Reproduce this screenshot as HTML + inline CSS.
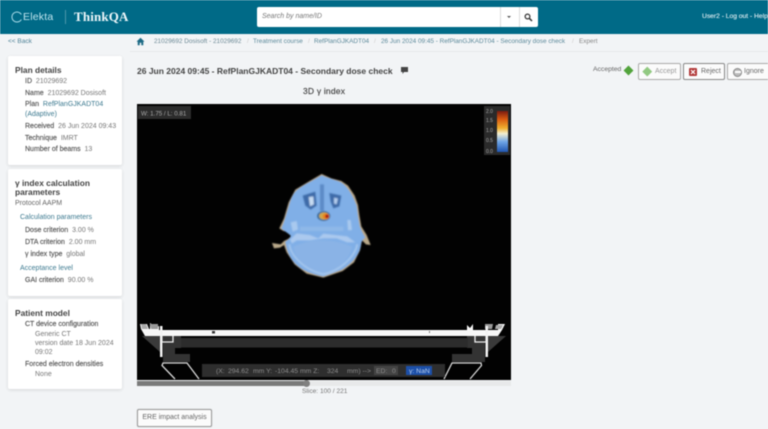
<!DOCTYPE html>
<html><head><meta charset="utf-8">
<style>
html,body{margin:0;padding:0;background:#f2f4f6}
#p{position:relative;width:768px;height:429px;overflow:hidden;background:#f2f4f6;font-family:"Liberation Sans",sans-serif;font-size:7px;color:#555;filter:blur(.5px)}
#p div{position:absolute;white-space:nowrap}
.card{background:#fff;border-radius:2px;box-shadow:0 1px 3px rgba(0,0,0,.12)}
.h{font-size:8.4px;font-weight:bold;color:#444}
.l{color:#555;-webkit-text-stroke:.15px #555}
.v{color:#777}
.t{color:#3d7a90}
.bc{top:38px;font-size:6.4px;color:#5d8a9b}
.sep{top:38px;font-size:6.4px;color:#ccc}
.btn{background:#fbfbfb;border:1px solid #aaa;border-radius:2px;box-sizing:border-box;font-size:7px;color:#666;height:17px;line-height:15px}
</style></head><body>
<div id="p">
<div style="left:0;top:0;width:768px;height:33.500px;background:#006a87"></div>
<svg style="position:absolute;left:11px;top:11px" width="12" height="12" viewBox="0 0 12 12"><path d="M10.300 3.500A5 5 0 1 0 10.300 8.500" fill="none" stroke="#a9dbe9" stroke-width="1"/></svg>
<div style="left:23px;top:10.500px;font-size:10.500px;color:#bfe4ee;letter-spacing:.2px">Elekta</div>
<div style="left:65px;top:10px;width:1px;height:14px;background:#4d97ab"></div>
<div style="left:74px;top:9px;font-family:'Liberation Serif',serif;font-weight:bold;font-size:13px;color:#eef7fa;letter-spacing:.15px">ThinkQA</div>
<div style="left:257px;top:7px;width:281px;height:20px;background:#fff;border-radius:2px"></div>
<div style="left:262px;top:12.500px;font-size:7px;font-style:italic;color:#777">Search by name/ID</div>
<div style="left:500px;top:7px;width:1px;height:20px;background:#ddd"></div>
<div style="left:519px;top:7px;width:1px;height:20px;background:#ddd"></div>
<div style="left:507px;top:16px;width:0;height:0;border:2px solid transparent;border-top:2px solid #555"></div>
<svg style="position:absolute;left:524px;top:13px" width="9" height="9" viewBox="0 0 9 9"><circle cx="3.500" cy="3.500" r="2.400" fill="none" stroke="#333" stroke-width="1.200"/><path d="M5.300 5.300L8 8" stroke="#333" stroke-width="1.500"/></svg>
<div style="left:702px;top:13px;font-size:6.700px;color:#e3f0f4;-webkit-text-stroke:.1px #e3f0f4">User2 - Log out - Help</div>

<div style="left:8px;top:38px;font-size:6.500px;color:#4d8196">&lt;&lt; Back</div>
<div style="left:130px;top:51px;width:638px;height:1px;background:#e6e8ea"></div>
<svg style="position:absolute;left:136px;top:37px" width="9" height="9" viewBox="0 0 9 9"><path d="M4.500 .8L.5 4.600H1.700V8.300H3.700V5.800H5.300V8.300H7.300V4.600H8.500Z" fill="#1d6a85"/></svg>
<div class="bc" style="left:154px;color:#6d8a96">21029692 Dosisoft - 21029692</div>
<div class="sep" style="left:247px">/</div>
<div class="bc" style="left:253px">Treatment course</div>
<div class="sep" style="left:308px">/</div>
<div class="bc" style="left:314px">RefPlanGJKADT04</div>
<div class="sep" style="left:374px">/</div>
<div class="bc" style="left:381px">26 Jun 2024 09:45 - RefPlanGJKADT04 - Secondary dose check</div>
<div class="sep" style="left:572px">/</div>
<div class="bc" style="left:579px;color:#888">Expert</div>

<div class="card" style="left:8px;top:56px;width:114px;height:109px"></div>
<div class="h" style="left:15px;top:65px">Plan details</div>
<div style="left:25px;top:78px"><span class="l">ID</span> <span class="v">&nbsp;21029692</span></div>
<div style="left:25px;top:90px"><span class="l">Name</span> <span class="v">&nbsp;21029692 Dosisoft</span></div>
<div style="left:25px;top:101px"><span class="l">Plan</span> <span class="t">&nbsp;RefPlanGJKADT04</span></div>
<div class="t" style="left:25px;top:111px">(Adaptive)</div>
<div style="left:25px;top:123px"><span class="l">Received</span> <span class="v">&nbsp;26 Jun 2024 09:43</span></div>
<div style="left:25px;top:135px"><span class="l">Technique</span> <span class="v">&nbsp;IMRT</span></div>
<div style="left:25px;top:146px"><span class="l">Number of beams</span> <span class="v">&nbsp;13</span></div>

<div class="card" style="left:8px;top:169px;width:114px;height:127px"></div>
<div class="h" style="left:15px;top:178px">γ index calculation</div>
<div class="h" style="left:15px;top:187px">parameters</div>
<div style="left:15px;top:200px;color:#666">Protocol AAPM</div>
<div class="t" style="left:20px;top:214px">Calculation parameters</div>
<div style="left:25px;top:227px"><span class="l">Dose criterion</span> <span class="v">&nbsp;3.00 %</span></div>
<div style="left:25px;top:239px"><span class="l">DTA criterion</span> <span class="v">&nbsp;2.00 mm</span></div>
<div style="left:25px;top:251px"><span class="l">γ index type</span> <span class="v">&nbsp;global</span></div>
<div class="t" style="left:20px;top:265px">Acceptance level</div>
<div style="left:25px;top:277px"><span class="l">GAI criterion</span> <span class="v">&nbsp;90.00 %</span></div>

<div class="card" style="left:8px;top:299px;width:114px;height:90px"></div>
<div class="h" style="left:15px;top:308px">Patient model</div>
<div class="l" style="left:25px;top:321px">CT device configuration</div>
<div class="v" style="left:35px;top:331px">Generic CT</div>
<div class="v" style="left:35px;top:340px">version date 18 Jun 2024</div>
<div class="v" style="left:35px;top:349px">09:02</div>
<div class="l" style="left:25px;top:361px">Forced electron densities</div>
<div class="v" style="left:35px;top:371px">None</div>

<div style="left:137px;top:66px;font-size:8.500px;font-weight:bold;color:#444">26 Jun 2024 09:45 - RefPlanGJKADT04 - Secondary dose check</div>
<svg style="position:absolute;left:400px;top:66px" width="9" height="9" viewBox="0 0 9 9"><path d="M1 1H8V6H4L2.500 8V6H1Z" fill="#444"/></svg>
<div style="left:303px;top:86px;font-size:8.500px;color:#444;-webkit-text-stroke:.15px #444;letter-spacing:.2px">3D γ index</div>

<div style="left:593px;top:66px;font-size:6.800px;color:#666">Accepted</div>
<div style="left:625px;top:67px;width:7px;height:7px;background:#52a43c;transform:rotate(45deg)"></div>
<div class="btn" style="left:638px;top:63px;width:43px"></div>
<div style="left:644px;top:68px;width:6.500px;height:6.500px;background:#92c982;transform:rotate(45deg)"></div>
<div style="left:655px;top:67.500px;font-size:7px;color:#999">Accept</div>
<div class="btn" style="left:683px;top:63px;width:42px;border-color:#888"></div>
<div style="left:689px;top:67.500px;width:8px;height:8px;background:#b23a3a;border-radius:1px"></div>
<svg style="position:absolute;left:689px;top:67.500px" width="8" height="8"><path d="M2 2L6 6M6 2L2 6" stroke="#fff" stroke-width="1.200"/></svg>
<div style="left:701px;top:67.500px;font-size:7px;color:#666">Reject</div>
<div class="btn" style="left:727px;top:63px;width:43px"></div>
<div style="left:733px;top:67.500px;width:7px;height:7px;border:1px solid #888;border-radius:50%;background:#bbb"></div>
<div style="left:734.500px;top:70.500px;width:6px;height:2px;background:#fff"></div>
<div style="left:744px;top:67.500px;font-size:7px;color:#666">Ignore</div>

<svg style="position:absolute;left:137px;top:104px" width="374" height="276" viewBox="137 104 374 276" font-family="Liberation Sans, sans-serif">
<defs>
<linearGradient id="g" x1="0" y1="0" x2="0" y2="1"><stop offset="0" stop-color="#7a1a10"/><stop offset=".2" stop-color="#d85a10"/><stop offset=".42" stop-color="#f0b030"/><stop offset=".55" stop-color="#f5efd0"/><stop offset=".75" stop-color="#6fa5e5"/><stop offset="1" stop-color="#1f55b0"/></linearGradient>
<filter id="b" x="-20%" y="-20%" width="140%" height="140%"><feGaussianBlur stdDeviation="2.500"/></filter>
<filter id="b2" x="-20%" y="-20%" width="140%" height="140%"><feGaussianBlur stdDeviation="1.200"/></filter>
</defs>
<rect x="137" y="104" width="374" height="276" fill="#020202"/>
<g transform="translate(260 165) scale(.3333)">
<g filter="url(#b2)">
<path d="M36 234L62 238L72 228L84 222L96 212L80 200L70 198L58 190L72 160L86 112L106 74L146 50L185 27L214 40L244 48L264 62L284 92L294 120L298 150L304 184L320 210L332 240L318 238L306 226L300 256L282 292L248 318L190 338L140 326L104 298L80 262L72 240L60 248L42 250Z" fill="#b9a98a"/>
<path d="M185 31C200 38 225 44 243 52C263 64 280 94 290 122C294 150 296 170 300 186C305 198 310 208 316 218C310 222 304 228 303 240C300 266 280 292 246 314L190 334C155 328 125 316 106 296C90 280 80 258 76 230C84 226 92 218 92 212C84 204 72 198 64 190C74 170 82 136 90 112C96 92 102 84 110 76C120 68 135 58 148 52Z" fill="#80afe7"/>
</g>
<g filter="url(#b)">
<path d="M128 92L166 80L170 122L152 134L136 122Z" fill="#3d6aa8"/>
<path d="M208 84L244 92L238 124L220 130L212 110Z" fill="#3d6aa8"/>
<path d="M146 96L160 94L162 118L150 124Z" fill="#c7dcf2"/>
<path d="M222 98L234 100L230 118L222 116Z" fill="#b3cdee"/>
<path d="M180 58H192V138H180Z" fill="#5c8ac6"/>
<path d="M92 172L110 168L114 194L98 200Z" fill="#a9c9ee"/>
<path d="M262 165L272 165L276 195L264 196Z" fill="#a9c9ee"/>
<path d="M90 224L110 205L150 210L175 220L190 206L225 210L262 214L286 232L262 232L230 220L190 220L150 226L110 226L96 236Z" fill="#abc9ee"/>
<path d="M120 185H250V198H120Z" fill="#8fb8e8"/>
<path d="M100 245C120 235 150 226 185 226C225 226 255 235 276 245C272 280 232 318 190 326C150 322 104 285 100 245Z" fill="#8ab3e6"/>
<path d="M88 238C92 270 130 315 190 328C240 318 285 275 292 238" fill="none" stroke="#a9c9ee" stroke-width="5"/>
</g>
<g filter="url(#b2)">
<ellipse cx="191" cy="153" rx="20" ry="15" fill="#3f6f9e"/>
<ellipse cx="192" cy="153" rx="15" ry="11" fill="#d2a64a"/>
<ellipse cx="198" cy="154" rx="10" ry="9" fill="#e8821f"/>
<circle cx="201" cy="154" r="5" fill="#a81818"/>
</g>
</g>
<path d="M140 324H147L149 329H150V323L156 327L159 326V330H467V325L470 328L473 324V330H498V324H505L502 330L498 336H145L141 329Z" fill="#f7f7f7"/>
<path d="M141 324H146L148 329H142Z" fill="#aaa"/><path d="M150 324H158V329H151Z" fill="#999"/>
<path d="M503 325H496L495 329H501Z" fill="#aaa"/><path d="M493 324H485V329H492Z" fill="#999"/>
<rect x="212" y="331" width="3" height="2.500" fill="#333"/><rect x="429" y="331" width="1" height="2" fill="#777"/>
<path d="M142 336L160 352V336Z" fill="#3a3a3a"/>
<path d="M506 336L488 352V336Z" fill="#3a3a3a"/>
<path d="M163 336H181V348H175V354H190V362H163Z" fill="#333"/>
<path d="M485 336H467V348H472V354H452V362H485Z" fill="#333"/>
<rect x="160" y="326" width="2.500" height="31" fill="#f2f2f2"/><rect x="485.500" y="326" width="2.500" height="31" fill="#f2f2f2"/>
<path d="M162 336V342H173V336" fill="none" stroke="#eee" stroke-width="1.300"/>
<path d="M486 336V342H475V336" fill="none" stroke="#eee" stroke-width="1.300"/>
<rect x="181" y="338" width="287" height="9.500" fill="#2c2c2c"/>
<path d="M175 379L162 365.500L163 363H187L199 379" fill="none" stroke="#d8d8d8" stroke-width="1.300"/>
<path d="M470 379L481.500 365.500L481 363H452L444 379" fill="none" stroke="#d8d8d8" stroke-width="1.300"/>
<rect x="202" y="364" width="243" height="13" fill="#2e2e2e"/>
<rect x="374" y="366" width="24" height="9" fill="#444"/>
<rect x="406" y="366" width="26" height="9" fill="#1c4fa8"/>
<g font-size="6.800" fill="#8c8c8c">
<text x="216" y="373">(X:</text><text x="228" y="373">294.62</text><text x="253" y="373">mm Y:</text><text x="275" y="373">-104.45</text><text x="300" y="373">mm Z:</text><text x="327" y="373">324</text><text x="347" y="373">mm) --&gt;</text>
<text x="376" y="373">ED:</text><text x="392" y="373">0</text>
</g>
<text x="409" y="373" font-size="6.800" fill="#b8cdea">γ: NaN</text>
<rect x="138" y="106" width="53" height="13" fill="#2c2c2c"/>
<text x="141" y="115.500" font-size="6.200" fill="#aaa">W: 1.75 / L: 0.81</text>
<rect x="484" y="106" width="26" height="49" fill="#2a2a2a"/>
<rect x="497" y="111" width="11" height="41" fill="url(#g)"/>
<g font-size="5" fill="#aaa"><text x="486" y="113">2.0</text><text x="486" y="122">1.5</text><text x="486" y="132">1.0</text><text x="486" y="142">0.5</text><text x="486" y="153">0.0</text></g>
</svg>
<div style="left:137px;top:381px;width:374px;height:4.500px;background:#e8e9ea"></div>
<div style="left:137px;top:381px;width:169px;height:4.500px;background:#7a7a7a"></div>
<div style="left:303px;top:380px;width:7px;height:7px;border-radius:50%;background:#808080"></div>
<div style="left:302px;top:388px;font-size:6.600px;color:#777">Slice: 100 / 221</div>
<div class="btn" style="left:137px;top:409px;width:75px;height:18px;line-height:16px;text-align:center;color:#666;border-color:#999;box-shadow:0 0 1px #bbb">ERE impact analysis</div>
</div>
</body></html>
